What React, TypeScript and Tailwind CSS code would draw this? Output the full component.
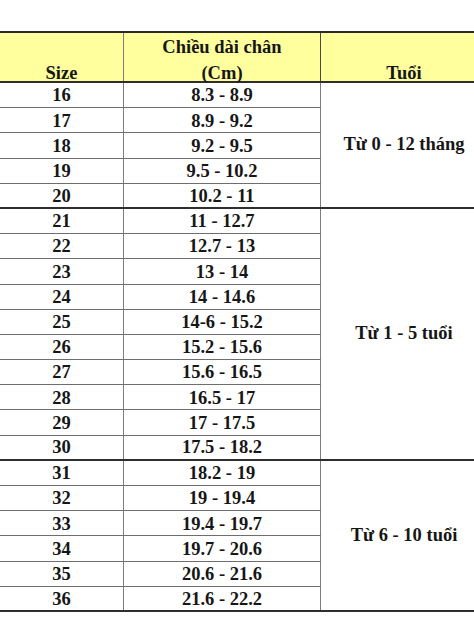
const groups = [
  {
    label: "Từ 0 - 12 tháng",
    rows: [
      ["16", "8.3 - 8.9"],
      ["17", "8.9 - 9.2"],
      ["18", "9.2 - 9.5"],
      ["19", "9.5 - 10.2"],
      ["20", "10.2 - 11"],
    ],
  },
  {
    label: "Từ 1 - 5 tuổi",
    rows: [
      ["21", "11 - 12.7"],
      ["22", "12.7 - 13"],
      ["23", "13 - 14"],
      ["24", "14 - 14.6"],
      ["25", "14-6 - 15.2"],
      ["26", "15.2 - 15.6"],
      ["27", "15.6 - 16.5"],
      ["28", "16.5 - 17"],
      ["29", "17 - 17.5"],
      ["30", "17.5 - 18.2"],
    ],
  },
  {
    label: "Từ 6 - 10 tuổi",
    rows: [
      ["31", "18.2 - 19"],
      ["32", "19 - 19.4"],
      ["33", "19.4 - 19.7"],
      ["34", "19.7 - 20.6"],
      ["35", "20.6 - 21.6"],
      ["36", "21.6 - 22.2"],
    ],
  },
];

export default function App() {
  return (
    <div className="w-full h-[632px] overflow-hidden bg-white pt-[31px] text-[#161616] font-bold text-[18.5px] font-['Liberation_Serif','Times_New_Roman',serif]">
      <div className="w-[487px] border-t-2 border-[#2a2a2a]">
        {/* header */}
        <div className="flex h-[50px] bg-[#ffff9e] border-b-2 border-[#2e2e2e]">
          <div className="w-[124px] border-r-[1.5px] border-[#7c7c7c] flex justify-center pt-[28px] leading-[25px]">
            Size
          </div>
          <div className="w-[197px] border-r-[1.5px] border-[#4a4a4a] flex flex-col items-center pt-[2px] leading-[25.5px]">
            <span>Chiều dài chân</span>
            <span>(Cm)</span>
          </div>
          <div className="flex-1 flex justify-center pt-[28px] leading-[25px]">Tuổi</div>
        </div>

        {groups.map((g) => (
          <div key={g.label} className="flex">
            <div className="w-[321px]">
              {g.rows.map(([size, len], i) => (
                <div
                  key={size}
                  className={
                    i === g.rows.length - 1
                      ? "flex h-[25.2px] border-b-2 border-[#2e2e2e]"
                      : "flex h-[25.2px] border-b border-[#6e6e6e]"
                  }
                >
                  <div className="w-[124px] border-r-[1.5px] border-[#7c7c7c] flex items-center justify-center leading-none pt-[1px]">
                    {size}
                  </div>
                  <div className="flex-1 border-r-[1.5px] border-[#7c7c7c] flex items-center justify-center leading-none pt-[1px]">
                    {len}
                  </div>
                </div>
              ))}
            </div>
            <div className="flex-1 flex items-center justify-center border-b-2 border-[#2e2e2e]">
              {g.label}
            </div>
          </div>
        ))}
      </div>
    </div>
  );
}
